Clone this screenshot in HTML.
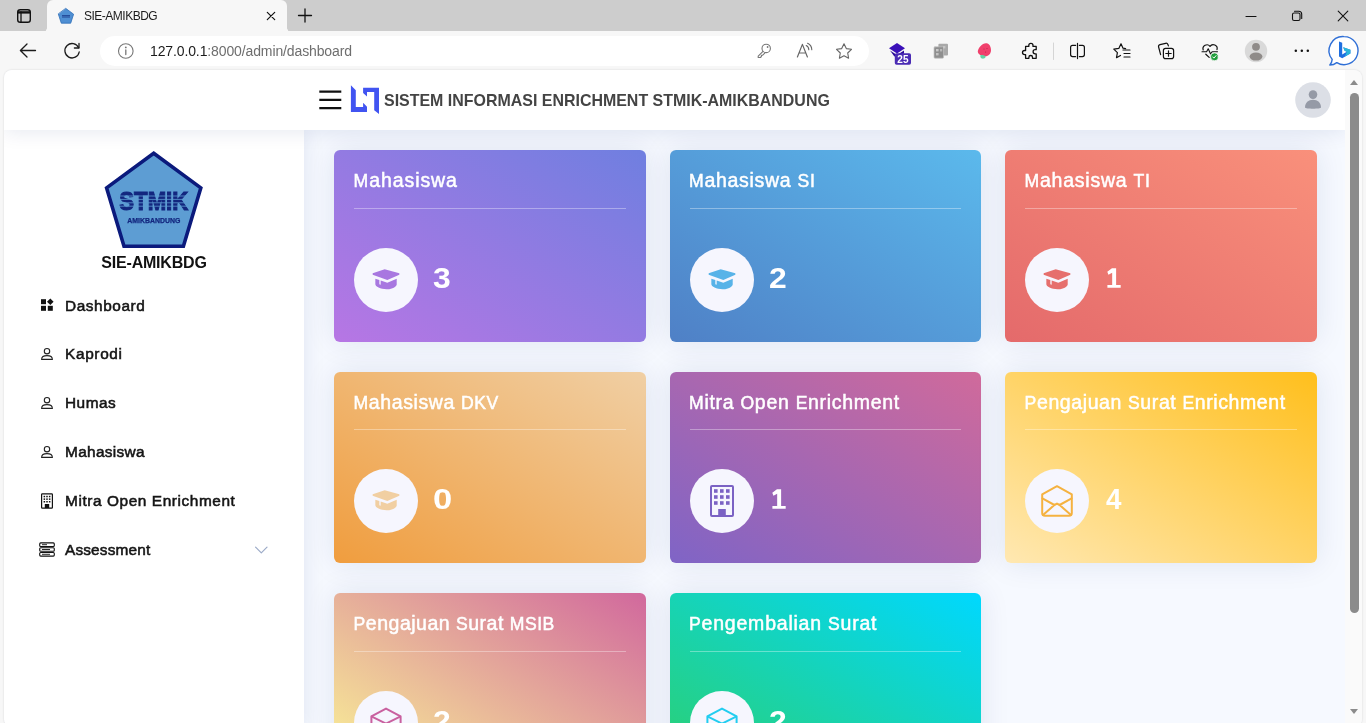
<!DOCTYPE html>
<html><head><meta charset="utf-8">
<style>
*{box-sizing:border-box;margin:0;padding:0}
html,body{width:1366px;height:723px;overflow:hidden;background:#f7f7f7;font-family:"Liberation Sans",sans-serif}
#tabstrip{will-change:transform;position:absolute;left:0;top:0;width:1366px;height:31.600px;background:#cdcdcd}
#tab{position:absolute;left:47px;top:0;width:240px;height:31.600px;background:#f7f7f7;border-radius:6px 6px 0 0}
#tab:before,#tab:after{content:"";position:absolute;bottom:0;width:4px;height:4px;background:radial-gradient(circle at 0 0,#cdcdcd 3.500px,#f7f7f7 4px)}
#tab:before{left:-4px}
#tab:after{right:-4px;background:radial-gradient(circle at 100% 0,#cdcdcd 3.500px,#f7f7f7 4px)}
#tabtitle{position:absolute;left:84px;top:9px;font-size:12px;letter-spacing:-.5px;color:#1b1b1b;white-space:nowrap}
#toolbar{will-change:transform;position:absolute;left:0;top:31px;width:1366px;height:39px;background:#f7f7f7}
#omni{position:absolute;left:100px;top:5px;width:769px;height:30px;border-radius:15px;background:#fff}
#url{position:absolute;left:50px;top:7px;font-size:14px;letter-spacing:-.12px;color:#1b1b1b;white-space:nowrap}
#url span{color:#6e6e6e}
#page{will-change:transform;position:absolute;left:4px;top:70px;width:1358px;height:656.500px;background:#f6f9ff;border-radius:8px;overflow:hidden;box-shadow:0 0 2px rgba(0,0,0,.16)}
#header{position:absolute;left:0;top:0;width:1341px;height:60px;background:#fff;box-shadow:0 2px 20px rgba(1,41,112,.1);z-index:5}
#sidebar{position:absolute;left:0;top:60px;width:300px;height:600px;background:#fff;box-shadow:0 0 20px rgba(1,41,112,.1);z-index:4}
#scroll{position:absolute;left:1341px;top:0;width:17px;height:653px;background:#fafafa;z-index:6}
#thumb{position:absolute;left:5px;top:23px;width:9px;height:520px;background:#8b8b8b;border-radius:4.500px}
#scroll:before,#scroll:after{content:"";position:absolute;left:5px;width:0;height:0;border-left:4.500px solid transparent;border-right:4.500px solid transparent}
#scroll:before{top:10px;border-bottom:5.200px solid #8b8b8b}
#scroll:after{top:639.200px;border-top:5.200px solid #8b8b8b}
#title{position:absolute;left:379.800px;top:21px;font-size:17px;font-weight:bold;color:#444;white-space:nowrap;transform:scaleX(.9385);transform-origin:0 0}
.card{position:absolute;width:311.5px;height:191.5px;border-radius:6px;box-shadow:0 0 30px rgba(1,41,112,.1);color:#fff}
.card h5{position:absolute;left:19.600px;top:18.700px;font-size:19.500px;font-weight:normal;letter-spacing:.6px;white-space:nowrap;line-height:22px;-webkit-text-stroke:.5px #fff}
.card .hr{position:absolute;left:20px;right:20px;top:58px;height:1px;background:rgba(255,255,255,.35)}
.card .ic{position:absolute;left:20px;top:97.600px;width:64px;height:64px;border-radius:50%;background:#f6f6fe}
.card .n{position:absolute;left:99px;top:111px;font-size:29.500px;line-height:34px;font-weight:bold;transform:scaleX(1.08);transform-origin:0 0}
#brand{position:absolute;left:0;width:300px;top:124px;text-align:center;font-size:16px;font-weight:bold;color:#111;letter-spacing:-.2px}
.card h5 .c{font-size:17.600px}
.ic .i{position:absolute}
.n.one{top:117.700px !important;left:102.100px !important;transform:none !important;line-height:0 !important}
.n .num{display:block}
.nav{position:absolute;left:61px;font-size:15.400px;font-weight:normal;color:#151515;white-space:nowrap;letter-spacing:.42px;-webkit-text-stroke:.55px #151515}
</style></head><body>
<div id="tabstrip"><div id="tab"><div id="tabtitle" style="left:37px">SIE-AMIKBDG</div></div></div>
<div id="toolbar"><div id="omni"><div id="url">127.0.0.1<span>:8000/admin/dashboard</span></div></div></div>
<svg id="chromeicons" width="1366" height="70" viewBox="0 0 1366 70" style="position:absolute;left:0;top:0;z-index:20" fill="none" stroke-linecap="round" stroke-linejoin="round">
<!-- tab actions -->
<rect x="17.7" y="9.7" width="12.6" height="12.6" rx="2.6" stroke="#111" stroke-width="1.4"/>
<path d="M17.7 12.4h12.6" stroke="#111" stroke-width="2.4" stroke-linecap="butt"/>
<path d="M21 12v10" stroke="#111" stroke-width="1.3"/>
<!-- favicon -->
<path d="M66 8.6 73.6 14.2 70.7 23.2H61.3L58.4 14.2Z" fill="#4f8fd3" stroke="#2f6fb8" stroke-width=".8"/>
<path d="M62 15.6h8M62 17h8" stroke="#1d3f8f" stroke-width=".9" stroke-linecap="butt"/>
<!-- tab close -->
<path d="M267.3 12.3l7.4 7.4M274.7 12.3l-7.4 7.4" stroke="#111" stroke-width="1.2"/>
<!-- new tab -->
<path d="M298.5 15.5h13M305 9v13" stroke="#111" stroke-width="1.3"/>
<!-- window controls -->
<path d="M1246 16.5h10" stroke="#111" stroke-width="1.1"/>
<rect x="1292.5" y="13" width="7.5" height="7.5" rx="1.6" stroke="#111" stroke-width="1.1"/>
<path d="M1294.5 11.3h4.2a3 3 0 0 1 3 3v4.2" stroke="#111" stroke-width="1.1"/>
<path d="M1338.2 11.2l9.6 9.6M1347.8 11.2l-9.6 9.6" stroke="#111" stroke-width="1.1"/>
<!-- back -->
<path d="M35.5 50.5H20.5M27 44l-6.6 6.5 6.6 6.5" stroke="#1b1b1b" stroke-width="1.3"/>
<!-- refresh -->
<path d="M78.6 47.6A7.2 7.2 0 1 0 79.2 52" stroke="#1b1b1b" stroke-width="1.3"/>
<path d="M79 43.4v4.6h-4.6" stroke="#1b1b1b" stroke-width="1.3"/>
<!-- info -->
<circle cx="125.8" cy="51" r="7.3" stroke="#777" stroke-width="1.1"/>
<path d="M125.8 50v4.6" stroke="#777" stroke-width="1.3"/><circle cx="125.8" cy="47.4" r=".9" fill="#777"/>
<!-- key -->
<circle cx="766.2" cy="48.4" r="4.2" stroke="#777" stroke-width="1.1"/>
<circle cx="767.6" cy="47" r=".9" fill="#777"/>
<path d="M763 51.4l-4.8 4.8v1.3h2.2l1-1v-1.3h1.3l2.1-2.1" stroke="#777" stroke-width="1.1"/>
<!-- read aloud -->
<path d="M797.4 57l5-12.6 5 12.6M799 53h6.8" stroke="#666" stroke-width="1.2"/>
<path d="M806.2 45.6a4.6 4.6 0 0 1 2.6 4.2M807.6 43.2a7.4 7.4 0 0 1 4.2 6.6" stroke="#666" stroke-width="1.1"/>
<!-- star -->
<path d="M844 43.8l2.3 4.8 5.2.7-3.8 3.7.9 5.2-4.6-2.5-4.6 2.5.9-5.2-3.8-3.7 5.2-.7z" stroke="#666" stroke-width="1.1"/>
<!-- grad cap ext -->
<path d="M897 43l8 5.2-8 5.2-8-5.2z" fill="#3a10b8"/>
<path d="M890 50.5l7 4.6 7-4.6v3l-7 4.6-3-2z" fill="#2a0a98"/>
<rect x="894.8" y="53.2" width="16.2" height="11.6" rx="1.8" fill="#4a2bb4"/>
<text x="902.9" y="62.6" font-family="Liberation Sans, sans-serif" font-size="10" font-weight="bold" fill="#fff" text-anchor="middle" stroke="none">25</text>
<!-- gray docs -->
<rect x="938.4" y="43.8" width="9.6" height="11.6" rx="1" fill="#a9a9a9"/>
<rect x="934" y="46.8" width="9.6" height="11.4" rx="1" fill="#8f8f8f" stroke="#c4c4c4" stroke-width=".7"/>
<rect x="936" y="49" width="2.6" height="2.4" fill="#c9c9c9"/><rect x="940" y="49" width="2.2" height="2.4" fill="#b9b9b9"/>
<rect x="936" y="53" width="2.6" height="2.4" fill="#c2c2c2"/>
<rect x="943" y="46" width="2.4" height="2.4" fill="#c6c6c6"/>
<!-- strawberry -->
<path d="M986.6 43.2c2.8.4 4.4 3.6 4.4 7 0 3.4-2.4 6-5.6 6-3.6 0-7.6-1.600-7.600-4.600 0-3.400 4.800-9 8.800-8.400z" fill="#f0406c"/>
<path d="M980.400 55.200c1.400-.6 4.600.2 5.400 1.200-.4 1.600-2 2.400-3.600 2.200-1.400-.2-2.200-1.800-1.800-3.400z" fill="#62d3a2"/>
<circle cx="984" cy="49" r=".5" fill="#b81c44"/><circle cx="987" cy="48.600" r=".5" fill="#b81c44"/><circle cx="985.6" cy="52" r=".5" fill="#b81c44"/>
<!-- puzzle -->
<path d="M1025.6 46.400h3.200v-1a2.100 2.100 0 0 1 4.200 0v1h3.200v3.300h-1a2.100 2.100 0 0 0 0 4.200h1v4.400h-3.700v-1a1.800 1.800 0 0 0-3.600 0v1h-3.300v-3.600h-1a2.100 2.100 0 0 1 0-4.200h1z" stroke="#111" stroke-width="1.300"/>
<!-- separator -->
<path d="M1053.5 43v16.500" stroke="#d5d5d5" stroke-width="1"/>
<!-- split -->
<path d="M1075.600 45.400h-3a2 2 0 0 0-2 2v7.200a2 2 0 0 0 2 2h3M1079.400 45.400h3a2 2 0 0 1 2 2v7.200a2 2 0 0 1-2 2h-3M1077.500 43.400v15.200" stroke="#111" stroke-width="1.200"/>
<!-- favorites -->
<path d="M1121 43.800l2 4.400 2.600.4M1121 43.800l-2.200 4.600-5 .7 3.600 3.500-.9 5.100 4-2.200" stroke="#111" stroke-width="1.200"/>
<path d="M1123 50h7M1124 53.500h6M1124 57h6" stroke="#111" stroke-width="1.200"/>
<!-- collections -->
<rect x="1163.400" y="48.400" width="10.200" height="10.200" rx="2.200" stroke="#111" stroke-width="1.200"/>
<path d="M1168.500 50.800v5.400M1165.800 53.500h5.400" stroke="#111" stroke-width="1.200"/>
<path d="M1160.600 54.600l-2-7.600a2 2 0 0 1 1.400-2.400l5.600-1.300a2 2 0 0 1 2.300 1.200l.5 1.400" stroke="#111" stroke-width="1.200"/>
<!-- heart -->
<path d="M1203.200 50a3.900 3.900 0 0 1 6.800-3.600 3.900 3.900 0 0 1 7 3.200M1205.800 54.200l3.400 3.200" stroke="#111" stroke-width="1.200"/>
<path d="M1202 51.800h4.600l1.600-3 2.400 5.200 1.500-2.200h5.400" stroke="#111" stroke-width="1.100"/>
<circle cx="1214.400" cy="56.800" r="3.900" fill="#1f9e3a" stroke="#f7f7f7" stroke-width=".8"/>
<path d="M1212.700 56.900l1.200 1.200 2.200-2.500" stroke="#fff" stroke-width="1"/>
<!-- profile -->
<circle cx="1256" cy="51" r="11.200" fill="#d9d9d9"/>
<circle cx="1256" cy="46.800" r="3.900" fill="#8f8b89"/>
<ellipse cx="1256" cy="56.600" rx="6.400" ry="4" fill="#8f8b89"/>
<!-- dots -->
<circle cx="1295.800" cy="50.800" r="1.250" fill="#111"/><circle cx="1301.800" cy="50.800" r="1.250" fill="#111"/><circle cx="1307.800" cy="50.800" r="1.250" fill="#111"/>
<!-- bing -->
<path d="M1344 36.600a14 14 0 1 1-7.200 26c-2 1.600-4.600 2.400-7 2.400 1.400-1.400 2.200-3.400 2.400-5.600A14 14 0 0 1 1344 36.600z" fill="#fff" stroke="#2f6fd6" stroke-width="1.400"/>
<path d="M1339 41.600l3.200 1.100v11.800l4.600-2.700-2.200-1-1.400-3.500 7.200 2.500v3.600l-8.200 4.800-3.200-1.800z" fill="#1f6fe0" stroke="none"/>
<path d="M1343.200 47.300l7.200 2.500v3.600l-5.400 3.100 1.800-4.700-2.200-1z" fill="#2bb7d8" stroke="none"/>
</svg>
<div id="page">
 <div id="header">
<svg width="1344" height="60" viewBox="0 0 1344 60" style="position:absolute;left:0;top:0">
<path d="M315 21.600h22M315 29.900h22M315 38.200h22" stroke="#111" stroke-width="2.200" stroke-linecap="butt" transform="translate(.3 0)"/>
<g fill="#4154f1">
<path d="M346.900 15.300 351.800 20.200V37.100H359.100V32.700L363 36.800V42H346.900z"/>
<path d="M359.100 17.700H375V44L370.200 40.200V21.900H363V26.600L359.100 23z"/>
</g>
<circle cx="1309" cy="30" r="17.800" fill="#dcdfe6"/>
<circle cx="1309" cy="24.600" r="4.300" fill="#959aa6"/>
<path d="M1301 37.600c0-5 3.400-7.800 8-7.800s8 2.800 8 7.800c0 1.600-16 1.600-16 0z" fill="#959aa6"/>
</svg>
<div id="title">SISTEM INFORMASI ENRICHMENT STMIK-AMIKBANDUNG</div></div>
 <div id="sidebar">
<svg width="300" height="600" viewBox="0 0 300 600" style="position:absolute;left:0;top:0">
<!-- logo: coords are abs minus (4,130) -->
<path d="M149.700 23.300 196.800 57.900 179.400 116.200H120L102.600 57.900Z" fill="#5d9dd3" stroke="#0b1a7c" stroke-width="3.600" stroke-linejoin="miter"/>
<text x="149.800" y="79.900" font-family="Liberation Sans, sans-serif" font-weight="bold" font-size="25.600" fill="#13277f" stroke="#13277f" stroke-width="1.100" text-anchor="middle" textLength="69" lengthAdjust="spacingAndGlyphs">STMIK</text>
<path d="M114 66h72M114 69.400h72M114 72.800h72M114 76.200h72" stroke="#5d9dd3" stroke-width=".8"/>
<text x="149.800" y="93" font-family="Liberation Sans, sans-serif" font-weight="bold" font-size="7.200" fill="#13277f" stroke="#13277f" stroke-width=".25" text-anchor="middle" textLength="53" lengthAdjust="spacingAndGlyphs">AMIKBANDUNG</text>
<!-- dashboard icon -->
<g fill="#111">
<rect x="37" y="169.200" width="5" height="5"/><rect x="37" y="175.800" width="5" height="5"/><rect x="43.800" y="175.800" width="5" height="5"/>
<path d="M46.300 168.400l3.300 3.300-3.300 3.300-3.300-3.300z"/>
</g>
<!-- person icons -->
<g id="pers" fill="none" stroke="#222" stroke-width="1.100">
<circle cx="43" cy="221.200" r="2.700"/>
<path d="M37.600 229.400c0-2.600 2.400-3.800 5.400-3.800s5.400 1.200 5.400 3.800z" stroke-linejoin="round"/>
</g>
<g fill="none" stroke="#222" stroke-width="1.100" transform="translate(0 49)">
<circle cx="43" cy="221.200" r="2.700"/>
<path d="M37.600 229.400c0-2.600 2.400-3.800 5.400-3.800s5.400 1.200 5.400 3.800z" stroke-linejoin="round"/>
</g><g fill="none" stroke="#222" stroke-width="1.100" transform="translate(0 98)">
<circle cx="43" cy="221.200" r="2.700"/>
<path d="M37.600 229.400c0-2.600 2.400-3.800 5.400-3.800s5.400 1.200 5.400 3.800z" stroke-linejoin="round"/>
</g>
<!-- building -->
<g>
<rect x="37.600" y="363.800" width="10.800" height="14.400" rx=".8" fill="none" stroke="#111" stroke-width="1.200"/>
<g fill="#111">
<rect x="39.600" y="365.800" width="1.500" height="1.500"/><rect x="42.250" y="365.800" width="1.500" height="1.500"/><rect x="44.900" y="365.800" width="1.500" height="1.500"/>
<rect x="39.600" y="368.400" width="1.500" height="1.500"/><rect x="42.250" y="368.400" width="1.500" height="1.500"/><rect x="44.900" y="368.400" width="1.500" height="1.500"/>
<rect x="39.600" y="371" width="1.500" height="1.500"/><rect x="42.250" y="371" width="1.500" height="1.500"/><rect x="44.900" y="371" width="1.500" height="1.500"/>
<rect x="40.800" y="374" width="4.400" height="4"/>
</g></g>
<!-- server icon -->
<g fill="none" stroke="#111" stroke-width="1.100">
<rect x="35.700" y="412.900" width="14.600" height="3.600" rx="1"/>
<rect x="35.700" y="417.700" width="14.600" height="3.600" rx="1"/>
<rect x="35.700" y="422.500" width="14.600" height="3.600" rx="1"/>
<path d="M38 414.700h5M38 419.500h8M38 424.300h8" stroke-width=".9"/>
</g>
<path d="M251.600 417.200l5.700 5.700 5.700-5.700" fill="none" stroke="#9cabc8" stroke-width="1.200" stroke-linecap="round" stroke-linejoin="round"/>
</svg>
<div id="brand">SIE-AMIKBDG</div>
  <div class="nav" style="top:167px;letter-spacing:0.57px">Dashboard</div>
  <div class="nav" style="top:215px;letter-spacing:0.66px">Kaprodi</div>
  <div class="nav" style="top:264px;letter-spacing:0.5px">Humas</div>
  <div class="nav" style="top:313px;letter-spacing:0.33px">Mahasiswa</div>
  <div class="nav" style="top:362px;letter-spacing:0.58px">Mitra Open Enrichment</div>
  <div class="nav" style="top:410.8px;letter-spacing:0.15px">Assessment</div>
 </div>
 <div id="main">
  <div class="card" style="left:330px;top:80.200px;background:linear-gradient(to top right,#b776e4,#6f7fe0)"><h5 style="top:19.2px;letter-spacing:0.92px"><span class="c">M</span>ahasiswa</h5><div class="hr" style="top:57.8px"></div><div class="ic" style="top:97.600px"><svg class="i" viewBox="0 0 24 24" style="left:16px;top:16px;width:32px;height:32px" fill="#a877e0"><path d="M2 7v1l11 4 9-4V7L11 4z"/><path d="M4 11v4.267c0 1.621 4.001 3.893 9 3.734 4-.126 6.586-1.972 7-3.467.024-.089.037-.178.037-.268V11L13 14l-5-1.667v3.213l-1-.364V12l-3-1z"/></svg></div><div class="n">3</div></div>
  <div class="card" style="left:665.5px;top:80.200px;background:linear-gradient(to top right,#4f80c6,#5bb9ec)"><h5 style="top:19.2px;letter-spacing:0.7px"><span class="c">M</span>ahasiswa <span class="c">SI</span></h5><div class="hr" style="top:57.8px"></div><div class="ic" style="top:97.600px"><svg class="i" viewBox="0 0 24 24" style="left:16px;top:16px;width:32px;height:32px" fill="#58b3e8"><path d="M2 7v1l11 4 9-4V7L11 4z"/><path d="M4 11v4.267c0 1.621 4.001 3.893 9 3.734 4-.126 6.586-1.972 7-3.467.024-.089.037-.178.037-.268V11L13 14l-5-1.667v3.213l-1-.364V12l-3-1z"/></svg></div><div class="n">2</div></div>
  <div class="card" style="left:1001px;top:80.200px;background:linear-gradient(to top right,#e46a6b,#f9907b)"><h5 style="top:19.2px;letter-spacing:0.76px"><span class="c">M</span>ahasiswa <span class="c">TI</span></h5><div class="hr" style="top:57.8px"></div><div class="ic" style="top:97.600px"><svg class="i" viewBox="0 0 24 24" style="left:16px;top:16px;width:32px;height:32px" fill="#e66f6d"><path d="M2 7v1l11 4 9-4V7L11 4z"/><path d="M4 11v4.267c0 1.621 4.001 3.893 9 3.734 4-.126 6.586-1.972 7-3.467.024-.089.037-.178.037-.268V11L13 14l-5-1.667v3.213l-1-.364V12l-3-1z"/></svg></div><div class="n one"><svg class="num" viewBox="0 0 14 20" style="width:14.200px;height:20.600px"><path d="M4.900 0h4.100v16.700h4.500V19.400H.4V16.700h4.700V4.600L1.400 6.500.300 3.500z" fill="#fff"/></svg></div></div>
  <div class="card" style="left:330px;top:301.700px;background:linear-gradient(to top right,#f09d3e,#f0cfa4)"><h5 style="top:19.7px;letter-spacing:0.6px"><span class="c">M</span>ahasiswa <span class="c">DKV</span></h5><div class="hr" style="top:57.3px"></div><div class="ic" style="top:97.600px"><svg class="i" viewBox="0 0 24 24" style="left:16px;top:16px;width:32px;height:32px" fill="#f1cfa2"><path d="M2 7v1l11 4 9-4V7L11 4z"/><path d="M4 11v4.267c0 1.621 4.001 3.893 9 3.734 4-.126 6.586-1.972 7-3.467.024-.089.037-.178.037-.268V11L13 14l-5-1.667v3.213l-1-.364V12l-3-1z"/></svg></div><div class="n" style="top:110px;left:98.600px;transform:scaleX(1.17)">0</div></div>
  <div class="card" style="left:665.5px;top:301.700px;background:linear-gradient(to top right,#7f64c6,#d06a9b)"><h5 style="top:19.7px;letter-spacing:0.7px"><span class="c">M</span>itra <span class="c">O</span>pen <span class="c">E</span>nrichment</h5><div class="hr" style="top:57.3px"></div><div class="ic" style="top:97.600px"><svg class="i" viewBox="0 0 24 32" style="left:20px;top:16px;width:24px;height:32px"><rect x="1" y="1" width="22" height="30" rx="1" fill="none" stroke="#7b62c4" stroke-width="2"/><rect x="4.0" y="4.2" width="3.6" height="3.6" fill="#7b62c4"/><rect x="10.0" y="4.2" width="3.6" height="3.6" fill="#7b62c4"/><rect x="16.0" y="4.2" width="3.6" height="3.6" fill="#7b62c4"/><rect x="4.0" y="10.2" width="3.6" height="3.6" fill="#7b62c4"/><rect x="10.0" y="10.2" width="3.6" height="3.6" fill="#7b62c4"/><rect x="16.0" y="10.2" width="3.6" height="3.6" fill="#7b62c4"/><rect x="4.0" y="16.2" width="3.6" height="3.6" fill="#7b62c4"/><rect x="10.0" y="16.2" width="3.6" height="3.6" fill="#7b62c4"/><rect x="16.0" y="16.2" width="3.6" height="3.6" fill="#7b62c4"/><rect x="8.200" y="24" width="7.600" height="7" fill="#7b62c4"/></svg></div><div class="n one" style="top:117.200px !important"><svg class="num" viewBox="0 0 14 20" style="width:14.200px;height:20.600px"><path d="M4.900 0h4.100v16.700h4.500V19.400H.4V16.700h4.700V4.600L1.400 6.500.300 3.500z" fill="#fff"/></svg></div></div>
  <div class="card" style="left:1001px;top:301.700px;background:linear-gradient(to top right,#ffe8b2,#ffbf1c)"><h5 style="top:19.7px;letter-spacing:0.6px"><span class="c">P</span>engajuan <span class="c">S</span>urat <span class="c">E</span>nrichment</h5><div class="hr" style="top:57.3px"></div><div class="ic" style="top:97.600px"><svg class="i" viewBox="0 0 32 32" style="left:16px;top:16px;width:32px;height:32px" fill="none" stroke="#f5b240" stroke-width="2" stroke-linejoin="round" stroke-linecap="round"><path d="M1.200 9.400 16 1.200 30.800 9.400V28a2.800 2.800 0 0 1-2.800 2.800H4A2.800 2.800 0 0 1 1.200 28z"/><path d="M1.400 13.400 13.400 20 16 18.600 18.600 20 30.600 13.400M2 30 13.400 20M30 30 18.600 20"/></svg></div><div class="n" style="top:110px;left:100.600px;transform:scaleX(.94)">4</div></div>
  <div class="card" style="left:330px;top:522.900px;background:linear-gradient(to top right,#fcf896,#d1689d)"><h5 style="top:19.5px;letter-spacing:0.5px"><span class="c">P</span>engajuan <span class="c">S</span>urat <span class="c">MSIB</span></h5><div class="hr" style="top:58.1px"></div><div class="ic" style="top:97.8px"><svg class="i" viewBox="0 0 32 32" style="left:16px;top:16px;width:32px;height:32px" fill="none" stroke="#c9609f" stroke-width="2" stroke-linejoin="round"><path d="M16 1.600 30.600 9.400V23L16 30.600 1.400 23V9.400z"/><path d="M1.400 9.400 16 16.600 30.600 9.400M16 16.600V30.600"/></svg></div><div class="n">2</div></div>
  <div class="card" style="left:665.5px;top:522.900px;background:linear-gradient(to top right,#2dcf6c,#00d8ff)"><h5 style="top:19.5px;letter-spacing:0.78px"><span class="c">P</span>engembalian <span class="c">S</span>urat</h5><div class="hr" style="top:58.1px"></div><div class="ic" style="top:97.8px"><svg class="i" viewBox="0 0 32 32" style="left:16px;top:16px;width:32px;height:32px" fill="none" stroke="#22cdf0" stroke-width="2" stroke-linejoin="round"><path d="M16 1.600 30.600 9.400V23L16 30.600 1.400 23V9.400z"/><path d="M1.400 9.400 16 16.600 30.600 9.400M16 16.600V30.600"/></svg></div><div class="n">2</div></div>
 </div>
 <div id="scroll"><div id="thumb"></div></div>
</div>
</body></html>
